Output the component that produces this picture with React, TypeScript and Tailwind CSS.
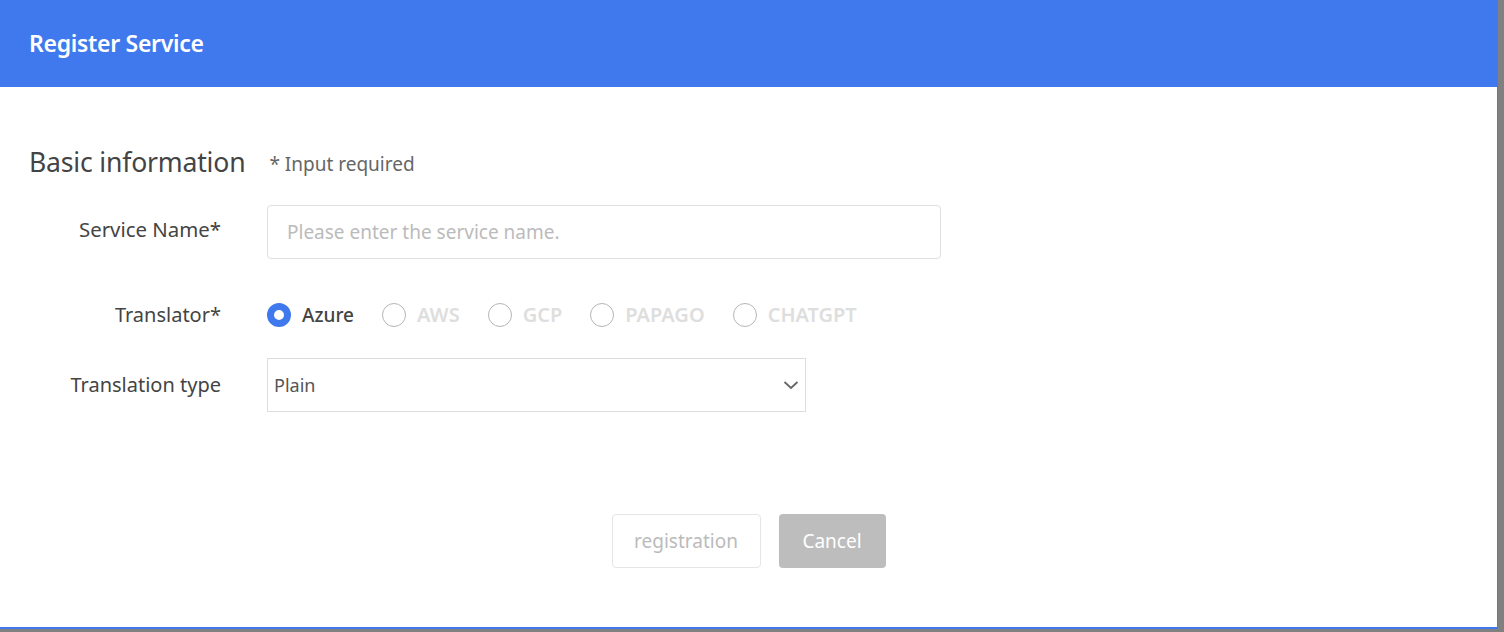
import React from "react";

const font = { fontFamily: '"Noto Sans", "Noto Sans CJK KR", sans-serif' };

function Radio({ label, checked, disabled }: { label: string; checked?: boolean; disabled?: boolean }) {
  return (
    <label className="flex items-center gap-[11px]">
      {checked ? (
        <span className="w-[24px] h-[24px] rounded-full border-[7px] border-[#4079ed] bg-white box-border" />
      ) : (
        <span className="w-[24px] h-[24px] rounded-full border-[1.5px] border-[#b5b5b5] bg-white box-border" />
      )}
      <span
        className={
          disabled
            ? "text-[20px] text-[#dedede] font-semibold leading-none"
            : "text-[19px] text-[#444444] font-medium leading-none"
        }
      >
        {label}
      </span>
    </label>
  );
}

export default function App() {
  return (
    <div className="w-[1504px] h-[632px] bg-[#808080] overflow-hidden" style={font}>
      <div className="w-[1498px] h-[629px] bg-white border-r-[1px] border-b-[2px] border-[#4079ed] flex flex-col">
        <div className="h-[87px] bg-[#4079ed] flex items-center pl-[29px] shrink-0">
          <h1 className="text-white text-[23px] font-semibold tracking-[-0.3px]">Register Service</h1>
        </div>
        <div className="flex flex-col pl-[29px]">
          <div className="flex items-baseline mt-[57px] h-[36px]">
            <h2 className="text-[26.6px] text-[#444444] leading-[36px] tracking-[-0.2px]">Basic information</h2>
            <span className="ml-[24px] text-[19px] text-[#666666] -translate-y-[1px]">* Input required</span>
          </div>
          <div className="flex items-center mt-[25px]">
            <div className="w-[192px] text-right text-[20.4px] text-[#444444] -mt-[6px]">Service Name*</div>
            <div className="ml-[46px] w-[674px] h-[54px] border border-[#e0e0e0] rounded-[4px] flex items-center px-[19px]">
              <span className="text-[19px] text-[#bbbbbb]">Please enter the service name.</span>
            </div>
          </div>
          <div className="flex items-center mt-[29px] h-[54px]">
            <div className="w-[192px] text-right text-[20px] text-[#444444]">Translator*</div>
            <div className="ml-[46px] flex items-center gap-[28px]">
              <Radio label="Azure" checked />
              <Radio label="AWS" disabled />
              <Radio label="GCP" disabled />
              <Radio label="PAPAGO" disabled />
              <Radio label="CHATGPT" disabled />
            </div>
          </div>
          <div className="flex items-center mt-[16px]">
            <div className="w-[192px] text-right text-[20px] text-[#444444]">Translation type</div>
            <div className="ml-[46px] w-[539px] h-[54px] border border-[#dddddd] flex items-center justify-between pl-[6px] pr-[2px]">
              <span className="text-[18px] text-[#555555]">Plain</span>
              <svg width="24" height="24" viewBox="0 0 24 24">
                <path d="M5.5 9 L12 15 L18.5 9" fill="none" stroke="#666666" strokeWidth="1.8" />
              </svg>
            </div>
          </div>
        </div>
        <div className="flex justify-center gap-[18px] mt-[102px]">
          <button className="w-[149px] h-[54px] border border-[#e5e5e5] rounded-[4px] bg-white text-[19px] text-[#bbbbbb]">
            registration
          </button>
          <button className="w-[107px] h-[54px] rounded-[4px] bg-[#bdbdbd] text-[19px] text-white">Cancel</button>
        </div>
      </div>
    </div>
  );
}
